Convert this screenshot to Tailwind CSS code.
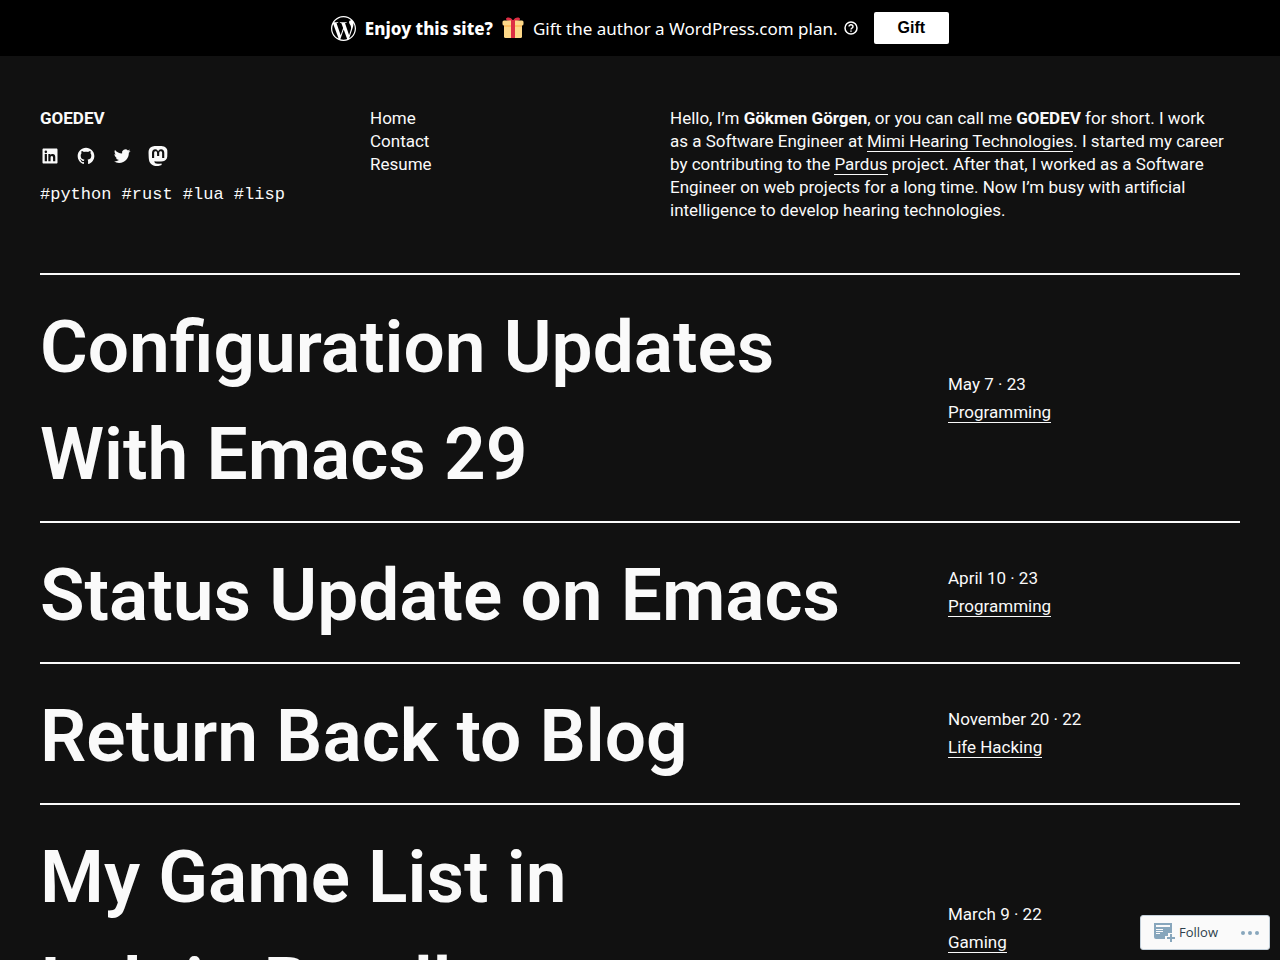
<!DOCTYPE html>
<html lang="en">
  <head>
    <meta charset="UTF-8" />
    <meta name="viewport" content="width=device-width, initial-scale=1.0" />
    <title>GOEDEV</title>
    <script src="https://cdn.jsdelivr.net/npm/@tailwindcss/browser@4"></script>
  </head>
  <body class="bg-[#111] text-[#fafafa] font-['Roboto',sans-serif] text-[17px] leading-[23px]">
    <!-- Gift banner -->
    <div class="bg-black text-white h-14 flex items-center justify-center font-['Noto_Sans',sans-serif]">
      <svg class="size-[25px] mr-[9px]" viewBox="0 0 24 24" fill="currentColor" aria-hidden="true">
        <path d="M21.469 6.825c.84 1.537 1.318 3.3 1.318 5.175 0 3.979-2.156 7.456-5.363 9.325l3.295-9.527c.615-1.54.82-2.771.82-3.864 0-.405-.026-.78-.07-1.11m-7.981.105c.647-.03 1.232-.105 1.232-.105.582-.075.514-.93-.067-.899 0 0-1.755.135-2.88.135-1.064 0-2.85-.15-2.85-.15-.585-.03-.661.855-.075.885 0 0 .54.061 1.125.09l1.68 4.605-2.37 7.08L5.354 6.9c.649-.03 1.234-.1 1.234-.1.585-.075.516-.93-.065-.896 0 0-1.746.138-2.874.138-.2 0-.438-.008-.69-.015C4.911 3.15 8.235 1.215 12 1.215c2.809 0 5.365 1.072 7.286 2.833-.046-.003-.091-.009-.141-.009-1.06 0-1.812.923-1.812 1.914 0 .89.513 1.643 1.06 2.531.411.72.89 1.643.89 2.977 0 .915-.354 1.994-.821 3.479l-1.075 3.585-3.9-11.61.001.014zM12 22.784c-1.059 0-2.081-.153-3.048-.437l3.237-9.406 3.315 9.087c.024.053.05.101.078.149-1.12.393-2.325.609-3.582.609M1.211 12c0-1.564.336-3.05.935-4.39L7.29 21.709C3.694 19.96 1.212 16.271 1.211 12M12 0C5.385 0 0 5.385 0 12s5.385 12 12 12 12-5.385 12-12S18.615 0 12 0" />
      </svg>
      <strong class="text-[17px] font-extrabold">Enjoy this site?</strong>
      <svg class="size-[22px] mx-[9px]" viewBox="0 0 22 22" aria-hidden="true">
        <path fill="#dd2e44" d="M11 4C8 4 4 4 4 2 4 .2 7 0 9 1.200 10 2 11 3.500 11 3.500s1-1.500 2-2.300c2-1.200 5-1 5 .8C18 4 14 4 11 4z" />
        <path fill="#fdd888" d="M2 7h18v12.500a1.500 1.500 0 0 1-1.500 1.500h-15A1.500 1.500 0 0 1 2 19.500z" />
        <path fill="#fcab40" d="M2 8h18v1.500H2z" />
        <rect x="0.500" y="3.500" width="21" height="5" rx="1.500" fill="#fdd888" />
        <path fill="#dd2e44" d="M9 3h4v18H9z" />
      </svg>
      <span class="text-[17px]">Gift the author a WordPress.com plan.</span>
      <svg class="size-[14px] ml-[6px]" viewBox="0 0 14 14" fill="none" stroke="currentColor" stroke-width="1.500" aria-hidden="true">
        <circle cx="7" cy="7" r="6" />
        <path d="M5 5.600a2 1.900 0 1 1 3 1.600c-.7.4-1 .7-1 1.300M7 9.500v1.300" />
      </svg>
      <button class="ml-4 h-8 px-6 pb-0.5 rounded-[2px] bg-white text-black text-[16px] font-bold font-['Liberation_Sans',sans-serif]">Gift</button>
    </div>

    <div class="px-10">
      <header class="grid grid-cols-[10fr_9fr_19fr] gap-[30px] pt-[51px] pb-[51px] border-b-2 border-[#fafafa]">
        <div>
          <a href="#" class="font-bold">GOEDEV</a>
          <div class="flex gap-4 pt-[11px]">
            <a href="#" aria-label="LinkedIn" class="py-[5px]">
              <svg class="size-5" viewBox="0 0 24 24" fill="currentColor"><path d="M19.700 3H4.300C3.582 3 3 3.582 3 4.300v15.400c0 .718.582 1.300 1.300 1.300h15.400c.718 0 1.300-.582 1.300-1.300V4.300c0-.718-.582-1.300-1.300-1.300zM8.339 18.338H5.667v-8.590h2.672v8.590zM7.004 8.574a1.548 1.548 0 1 1 0-3.096 1.548 1.548 0 0 1 0 3.096zm11.335 9.764h-2.669v-4.177c0-.996-.017-2.278-1.387-2.278-1.389 0-1.601 1.086-1.601 2.206v4.249h-2.667v-8.590h2.559v1.174h.037c.356-.675 1.227-1.387 2.526-1.387 2.703 0 3.203 1.779 3.203 4.092v4.711z" /></svg>
            </a>
            <a href="#" aria-label="GitHub" class="py-[5px]">
              <svg class="size-5" viewBox="0 0 24 24" fill="currentColor"><path d="M12 2C6.477 2 2 6.477 2 12c0 4.419 2.865 8.166 6.839 9.489.5.090.682-.218.682-.484 0-.236-.009-.866-.014-1.699-2.782.602-3.369-1.340-3.369-1.340-.455-1.157-1.110-1.465-1.110-1.465-.909-.620.069-.608.069-.608 1.004.071 1.532 1.030 1.532 1.030.891 1.529 2.341 1.089 2.910.833.091-.647.349-1.086.635-1.337-2.220-.251-4.555-1.111-4.555-4.943 0-1.091.390-1.984 1.030-2.682-.103-.254-.447-1.270.097-2.646 0 0 .840-.269 2.750 1.025.799-.222 1.649-.333 2.503-.337.850.004 1.705.114 2.504.336 1.909-1.294 2.748-1.025 2.748-1.025.546 1.376.202 2.394.100 2.646.640.699 1.026 1.591 1.026 2.682 0 3.841-2.337 4.687-4.565 4.935.359.307.679.917.679 1.852 0 1.335-.012 2.415-.012 2.741 0 .269.180.579.688.481C19.138 20.161 22 16.416 22 12c0-5.523-4.477-10-10-10z" /></svg>
            </a>
            <a href="#" aria-label="Twitter" class="py-[5px]">
              <svg class="size-5" viewBox="0 0 24 24" fill="currentColor"><path d="M22.230 5.924a8.212 8.212 0 0 1-2.357.646 4.115 4.115 0 0 0 1.804-2.270 8.221 8.221 0 0 1-2.606.996 4.103 4.103 0 0 0-6.991 3.742 11.647 11.647 0 0 1-8.457-4.287 4.087 4.087 0 0 0-.556 2.063 4.100 4.100 0 0 0 1.825 3.415 4.090 4.090 0 0 1-1.859-.513v.052a4.104 4.104 0 0 0 3.292 4.023 4.099 4.099 0 0 1-1.853.070 4.110 4.110 0 0 0 3.833 2.850 8.236 8.236 0 0 1-5.096 1.756c-.331 0-.658-.019-.979-.057a11.617 11.617 0 0 0 6.290 1.843c7.547 0 11.675-6.252 11.675-11.675 0-.178-.004-.355-.012-.531a8.298 8.298 0 0 0 2.047-2.123z" /></svg>
            </a>
            <a href="#" aria-label="Mastodon" class="py-[5px]">
              <svg class="size-5" viewBox="0 0 24 24" fill="currentColor"><path d="M23.268 5.313c-.350-2.578-2.617-4.610-5.304-5.004C17.510.242 15.792 0 11.813 0h-.030c-3.980 0-4.835.242-5.288.309C3.882.692 1.496 2.518.917 5.127.640 6.412.610 7.837.661 9.143c.074 1.874.088 3.745.260 5.611.118 1.240.325 2.470.620 3.680.550 2.237 2.777 4.098 4.960 4.857 2.336.792 4.849.923 7.256.380.265-.061.527-.132.786-.213.585-.184 1.270-.390 1.774-.753v-1.809a20.282 20.282 0 0 1-4.709.545c-2.730 0-3.463-1.284-3.674-1.818a5.593 5.593 0 0 1-.319-1.433c1.517.363 3.072.546 4.632.546.376 0 .750 0 1.125-.010 1.570-.044 3.224-.124 4.768-.422 2.435-.464 4.753-1.920 4.989-5.604.008-.145.030-1.520.030-1.670.002-.512.167-3.630-.024-5.545zm-3.748 9.195h-2.561V8.290c0-1.309-.550-1.976-1.670-1.976-1.230 0-1.846.790-1.846 2.350v3.403h-2.546V8.663c0-1.560-.617-2.350-1.848-2.350-1.112 0-1.668.668-1.670 1.977v6.218H4.822V8.102c0-1.310.337-2.350 1.011-3.120.696-.770 1.608-1.164 2.740-1.164 1.311 0 2.302.500 2.962 1.498l.638 1.060.638-1.060c.660-.999 1.650-1.498 2.960-1.498 1.130 0 2.043.395 2.740 1.164.675.770 1.012 1.810 1.012 3.120z" /></svg>
            </a>
          </div>
          <p class="pt-3 text-[17px] leading-[23px] font-['Liberation_Mono',monospace]">#python #rust #lua #lisp</p>
        </div>
        <nav class="flex flex-col items-start">
          <a href="#">Home</a>
          <a href="#">Contact</a>
          <a href="#">Resume</a>
        </nav>
        <p>
          Hello, I’m <strong>Gökmen Görgen</strong>, or you can call me <strong>GOEDEV</strong> for short. I work<br />
          as a Software Engineer at <a href="#" class="border-b border-[#fafafa]">Mimi Hearing Technologies</a>. I started my career<br />
          by contributing to the <a href="#" class="border-b border-[#fafafa]">Pardus</a> project. After that, I worked as a Software<br />
          Engineer on web projects for a long time. Now I’m busy with artificial<br />
          intelligence to develop hearing technologies.
        </p>
      </header>

      <main class="leading-7">
        <article class="grid grid-cols-[908fr_292fr] items-center pt-[19px] pb-[13px] border-b-2 border-[#fafafa]">
          <h2 class="text-[73px] leading-[107px] font-semibold"><a href="#">Configuration Updates<br />With Emacs 29</a></h2>
          <div class="pb-[7px]">
            <p>May 7 · 23</p>
            <a href="#" class="border-b border-[#fafafa]">Programming</a>
          </div>
        </article>
        <article class="grid grid-cols-[908fr_292fr] items-center pt-[19px] pb-[13px] border-b-2 border-[#fafafa]">
          <h2 class="text-[73px] leading-[107px] font-semibold"><a href="#">Status Update on Emacs</a></h2>
          <div class="pb-[7px]">
            <p>April 10 · 23</p>
            <a href="#" class="border-b border-[#fafafa]">Programming</a>
          </div>
        </article>
        <article class="grid grid-cols-[908fr_292fr] items-center pt-[19px] pb-[13px] border-b-2 border-[#fafafa]">
          <h2 class="text-[73px] leading-[107px] font-semibold"><a href="#">Return Back to Blog</a></h2>
          <div class="pb-[7px]">
            <p>November 20 · 22</p>
            <a href="#" class="border-b border-[#fafafa]">Life Hacking</a>
          </div>
        </article>
        <article class="grid grid-cols-[908fr_292fr] items-center pt-[19px] pb-[13px] border-b-2 border-[#fafafa]">
          <h2 class="text-[73px] leading-[107px] font-semibold"><a href="#">My Game List in<br />Itch.io Bundle</a></h2>
          <div class="pb-[7px]">
            <p>March 9 · 22</p>
            <a href="#" class="border-b border-[#fafafa]">Gaming</a>
          </div>
        </article>
      </main>
    </div>

    <!-- Follow bar -->
    <div class="fixed right-[10px] bottom-[10px] h-[35px] flex items-center pl-[13px] pr-[10px] bg-[#fafafa] border border-[#c3d0da] rounded-[3px] font-['Open_Sans',sans-serif] text-[13px] text-[#2c3f4c]">
      <button class="flex items-center gap-1">
        <svg class="w-[21px] h-[19px]" viewBox="0 0 21 19" fill="#87a6bc" aria-hidden="true">
          <path fill-rule="evenodd" d="M0 0h18v10h-4v3h-3v3H2a2 2 0 0 1-2-2zM2 2v2h14V2zM2 6v1h7V6zm0 2v1h7V8zm0 2v1h4v-1z" />
          <path d="M16 11h2v3h3v2h-3v3h-2v-3h-3v-2h3z" />
        </svg>
        Follow
      </button>
      <button class="ml-[23px]" aria-label="More">
        <svg class="w-[18px] h-1" viewBox="0 0 18 4" fill="#87a6bc"><circle cx="2" cy="2" r="2" /><circle cx="9" cy="2" r="2" /><circle cx="16" cy="2" r="2" /></svg>
      </button>
    </div>
  </body>
</html>
